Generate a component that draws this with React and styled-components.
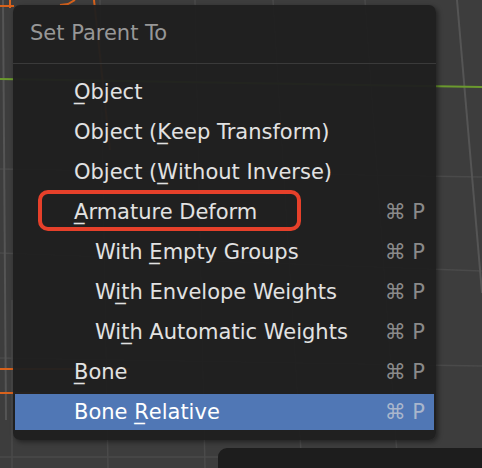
import React from "react";
import styled, { createGlobalStyle } from "styled-components";

const Global = createGlobalStyle`
  html, body { margin: 0; padding: 0; background: #3d3d3d; overflow: hidden; }
  #root { width: 482px; height: 468px; }
`;

const Viewport = styled.div`
  position: relative;
  width: 482px;
  height: 468px;
  overflow: hidden;
  background: #3d3d3d;
  display: flex;
  flex-direction: column;
  align-items: flex-start;
  font-family: "DejaVu Sans", "Liberation Sans", sans-serif;
`;

const Backdrop = styled.svg`
  position: absolute;
  inset: 0;
  width: 482px;
  height: 468px;
`;

const Menu = styled.div`
  position: relative;
  z-index: 1;
  margin: 5px 0 0 13px;
  width: 423px;
  box-sizing: border-box;
  padding-bottom: 8px;
  background: rgba(31, 31, 31, 0.96);
  border-radius: 7px;
  box-shadow: 2px 2px 5px rgba(0, 0, 0, 0.45);
`;

const Header = styled.div`
  height: 58px;
  line-height: 57px;
  padding-left: 17px;
  font-size: 21px;
  color: #979797;
  border-bottom: 1px solid #3a3a3a;
  margin-bottom: 8px;
`;

const Row = styled.div`
  height: 40px;
  padding: 2px;
  box-sizing: border-box;
`;

const RowInner = styled.div`
  height: 36px;
  display: flex;
  align-items: center;
  justify-content: space-between;
  padding-left: ${(p) => (p.$indent ? 80 : 59)}px;
  padding-right: 9px;
  background: ${(p) => (p.$active ? "#5077b5" : "transparent")};
  font-size: 21px;
  line-height: 36px;
`;

const Label = styled.span`
  color: ${(p) => (p.$active ? "#ffffff" : "#e2e2e2")};
  white-space: pre;
`;

const Mnemonic = styled.span`
  position: relative;
  &::after {
    content: "_";
    position: absolute;
    left: 0;
    top: 0;
    line-height: normal;
  }
`;

const Shortcut = styled.span`
  color: ${(p) => (p.$active ? "#a9b6cc" : "#8a8a8a")};
  white-space: pre;
`;

const Annotation = styled.div`
  position: absolute;
  left: 25px;
  top: 185px;
  width: 263px;
  height: 41px;
  box-sizing: border-box;
  border: 4px solid #e6402a;
  border-radius: 10px;
  pointer-events: none;
`;

const BottomPanel = styled.div`
  position: relative;
  z-index: 1;
  margin: 8px 0 0 218px;
  align-self: stretch;
  flex: 1;
  background: #1d1d1d;
  border-top-left-radius: 9px;
`;

const items = [
  { pre: "", u: "O", post: "bject" },
  { pre: "Object (", u: "K", post: "eep Transform)" },
  { pre: "Object (", u: "W", post: "ithout Inverse)" },
  { pre: "", u: "A", post: "rmature Deform", sc: true },
  { pre: "With ", u: "E", post: "mpty Groups", sc: true, indent: true },
  { pre: "W", u: "i", post: "th Envelope Weights", sc: true, indent: true },
  { pre: "Wi", u: "t", post: "h Automatic Weights", sc: true, indent: true },
  { pre: "", u: "B", post: "one", sc: true },
  { pre: "Bone ", u: "R", post: "elative", sc: true, active: true },
];

export default function App() {
  return (
    <>
      <Global />
      <Viewport>
        <Backdrop viewBox="0 0 482 468">
          <g stroke="#4a4a4a" strokeWidth="1.5" fill="none">
            <line x1="0" y1="169" x2="482" y2="177" />
            <line x1="0" y1="253" x2="482" y2="271" />
            <line x1="0" y1="358" x2="482" y2="366" />
            <line x1="0" y1="457" x2="482" y2="457" />
            <line x1="12" y1="300" x2="12" y2="468" />
            <line x1="100" y1="0" x2="108" y2="468" />
            <line x1="195" y1="0" x2="205" y2="468" />
            <line x1="273" y1="0" x2="302" y2="468" />
            <line x1="365" y1="0" x2="398" y2="468" />
          </g>
          <line x1="3" y1="0" x2="6" y2="420" stroke="#555" strokeWidth="2" />
          <line x1="457" y1="0" x2="482" y2="293" stroke="#555" strokeWidth="2" />
          <line x1="0" y1="79" x2="482" y2="87" stroke="#6b9a2e" strokeWidth="2" />
          <g stroke="#d8621c" strokeWidth="2" fill="none">
            <line x1="0" y1="6" x2="14" y2="6" />
            <line x1="10" y1="0" x2="10" y2="8" />
            <path d="M60 5 L68 4 L75 0" />
            <line x1="94" y1="0" x2="110" y2="150" />
            <line x1="0" y1="369" x2="130" y2="369" />
            <line x1="0" y1="393" x2="40" y2="393" />
          </g>
        </Backdrop>
        <Menu>
          <Header>Set Parent To</Header>
          {items.map((it, i) => (
            <Row key={i}>
              <RowInner $indent={it.indent} $active={it.active}>
                <Label $active={it.active}>
                  {it.pre}
                  <Mnemonic>{it.u}</Mnemonic>
                  {it.post}
                </Label>
                {it.sc && <Shortcut $active={it.active}>⌘ P</Shortcut>}
              </RowInner>
            </Row>
          ))}
          <Annotation />
        </Menu>
        <BottomPanel />
      </Viewport>
    </>
  );
}
